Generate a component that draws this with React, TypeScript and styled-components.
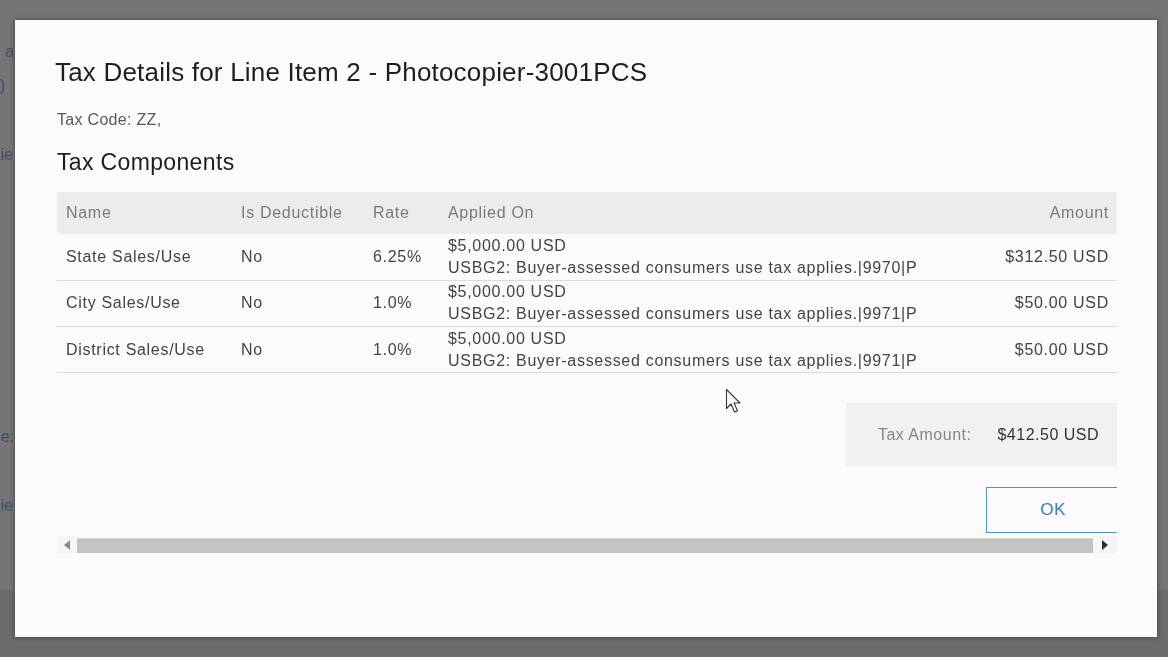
import React from "react";
import styled, { createGlobalStyle } from "styled-components";

const GlobalStyle = createGlobalStyle`
  html, body { margin: 0; padding: 0; }
  body {
    background: #767476;
    font-family: "Liberation Sans", Arial, sans-serif;
    overflow: hidden;
  }
  * { box-sizing: border-box; }
`;

const Page = styled.div`
  width: 1168px;
  height: 657px;
  display: grid;
  grid-template-rows: 590px 1fr;
  background: #767476;
`;

const PageBody = styled.div`
  display: flex;
  flex-direction: column;
  width: 15px;
  overflow: hidden;
`;

const PageFooter = styled.div`
  background: #6c6a6c;
`;

const BackText = styled.div<{ $gap: number; $pad?: number }>`
  margin-top: ${(p) => p.$gap}px;
  padding-right: ${(p) => p.$pad ?? 0}px;
  display: flex;
  justify-content: flex-end;
  white-space: nowrap;
  font-size: 16px;
  line-height: 20px;
  color: #3f5066;
`;

const Modal = styled.div`
  position: fixed;
  left: 15px;
  top: 20px;
  width: 1142px;
  height: 617px;
  background: #fcfafa;
  box-shadow: 0 0 4px 1px rgba(40, 40, 40, 0.45);
  padding: 37px 40px 0 42px;
  display: flex;
  flex-direction: column;
`;

const Title = styled.h2`
  margin: 0 0 0 -2px;
  font-size: 26px;
  line-height: 30px;
  font-weight: 400;
  letter-spacing: 0.2px;
  color: #1e1e1e;
`;

const TaxCode = styled.div`
  margin-top: 23px;
  font-size: 16px;
  line-height: 20px;
  letter-spacing: 0.3px;
  color: #595959;
`;

const Section = styled.h3`
  margin: 18px 0 0 0;
  font-size: 23px;
  line-height: 28px;
  font-weight: 400;
  letter-spacing: 0.35px;
  color: #1e1e1e;
`;

const Table = styled.table`
  margin-top: 16px;
  width: 100%;
  border-collapse: collapse;
  table-layout: fixed;
  font-size: 16px;
  letter-spacing: 0.7px;
`;

const HeadCell = styled.th<{ $w?: number; $right?: boolean }>`
  width: ${(p) => (p.$w ? `${p.$w}px` : "auto")};
  height: 42px;
  padding: 0 ${(p) => (p.$right ? 8 : 0)}px 0 9px;
  background: #edebeb;
  color: #7a7a7a;
  font-weight: 400;
  text-align: ${(p) => (p.$right ? "right" : "left")};
  vertical-align: middle;
`;

const Row = styled.tr`
  border-bottom: 1px solid #dcdada;
`;

const Cell = styled.td<{ $right?: boolean }>`
  height: 46.3px;
  padding: 0 ${(p) => (p.$right ? 8 : 0)}px 0 9px;
  color: #444;
  line-height: 22px;
  text-align: ${(p) => (p.$right ? "right" : "left")};
  vertical-align: middle;
  white-space: nowrap;
`;

const Summary = styled.div`
  margin: 30px 0 0 auto;
  width: 271px;
  height: 63px;
  background: #f2f0f0;
  display: flex;
  align-items: center;
  justify-content: flex-end;
  gap: 26px;
  padding-right: 18px;
  font-size: 16px;
  letter-spacing: 0.5px;
`;

const SummaryLabel = styled.span`
  color: #858585;
`;

const SummaryValue = styled.span`
  color: #333;
`;

const Actions = styled.div`
  margin-top: 21px;
  display: flex;
  justify-content: flex-end;
  overflow: hidden;
`;

const OkButton = styled.button`
  flex: none;
  width: 134px;
  height: 46px;
  margin-right: -3px;
  background: #fcfafa;
  border: 1px solid #4a97c4;
  color: #3b80b2;
  font-family: "Liberation Sans", Arial, sans-serif;
  font-size: 17px;
  letter-spacing: 0.5px;
  padding: 0;
`;

const ScrollBar = styled.div`
  margin-top: 3px;
  height: 18px;
  display: grid;
  grid-template-columns: 20px 1fr 24px;
  align-items: center;
`;

const ArrowBox = styled.div`
  height: 18px;
  display: flex;
  align-items: center;
  justify-content: center;
  background: #f6f4f4;
`;

const Track = styled.div`
  height: 15px;
  background: #c5c2c3;
  border-top: 1px solid #d8d6d6;
`;

const Cursor = styled.svg`
  position: fixed;
  left: 725px;
  top: 388px;
`;

const rows = [
  { name: "State Sales/Use", rate: "6.25%", code: "9970", amount: "$312.50 USD" },
  { name: "City Sales/Use", rate: "1.0%", code: "9971", amount: "$50.00 USD" },
  { name: "District Sales/Use", rate: "1.0%", code: "9971", amount: "$50.00 USD" },
];

export default function App() {
  return (
    <>
      <GlobalStyle />
      <Page>
        <PageBody>
          <BackText $gap={42} $pad={1}>a</BackText>
          <BackText $gap={14} $pad={10}>)</BackText>
          <BackText $gap={49} $pad={2}>ie</BackText>
          <BackText $gap={262} $pad={1}>e:</BackText>
          <BackText $gap={49} $pad={2}>ie</BackText>
        </PageBody>
        <PageFooter />
      </Page>
      <Modal>
        <Title>Tax Details for Line Item 2 - Photocopier-3001PCS</Title>
        <TaxCode>Tax Code: ZZ,</TaxCode>
        <Section>Tax Components</Section>
        <Table>
          <thead>
            <tr>
              <HeadCell $w={175}>Name</HeadCell>
              <HeadCell $w={132}>Is Deductible</HeadCell>
              <HeadCell $w={75}>Rate</HeadCell>
              <HeadCell>Applied On</HeadCell>
              <HeadCell $w={170} $right>
                Amount
              </HeadCell>
            </tr>
          </thead>
          <tbody>
            {rows.map((r) => (
              <Row key={r.name}>
                <Cell>{r.name}</Cell>
                <Cell>No</Cell>
                <Cell>{r.rate}</Cell>
                <Cell>
                  $5,000.00 USD
                  <br />
                  USBG2: Buyer-assessed consumers use tax applies.|{r.code}|P
                </Cell>
                <Cell $right>{r.amount}</Cell>
              </Row>
            ))}
          </tbody>
        </Table>
        <Summary>
          <SummaryLabel>Tax Amount:</SummaryLabel>
          <SummaryValue>$412.50 USD</SummaryValue>
        </Summary>
        <Actions>
          <OkButton>OK</OkButton>
        </Actions>
        <ScrollBar>
          <ArrowBox>
            <svg width="6" height="10" viewBox="0 0 6 10">
              <path d="M6 0 L0 5 L6 10 Z" fill="#8a8a8a" />
            </svg>
          </ArrowBox>
          <Track />
          <ArrowBox>
            <svg width="6" height="10" viewBox="0 0 6 10">
              <path d="M0 0 L6 5 L0 10 Z" fill="#2e2e2e" />
            </svg>
          </ArrowBox>
        </ScrollBar>
      </Modal>
      <Cursor width="20" height="28" viewBox="0 0 20 28">
        <path
          d="M1.5 1.5 L1.5 20.5 L6 16 L9.5 24 L12.5 22.7 L9 15 L15 15 Z"
          fill="#ffffff"
          stroke="#333"
          strokeWidth="1.1"
          strokeLinejoin="round"
        />
      </Cursor>
    </>
  );
}
